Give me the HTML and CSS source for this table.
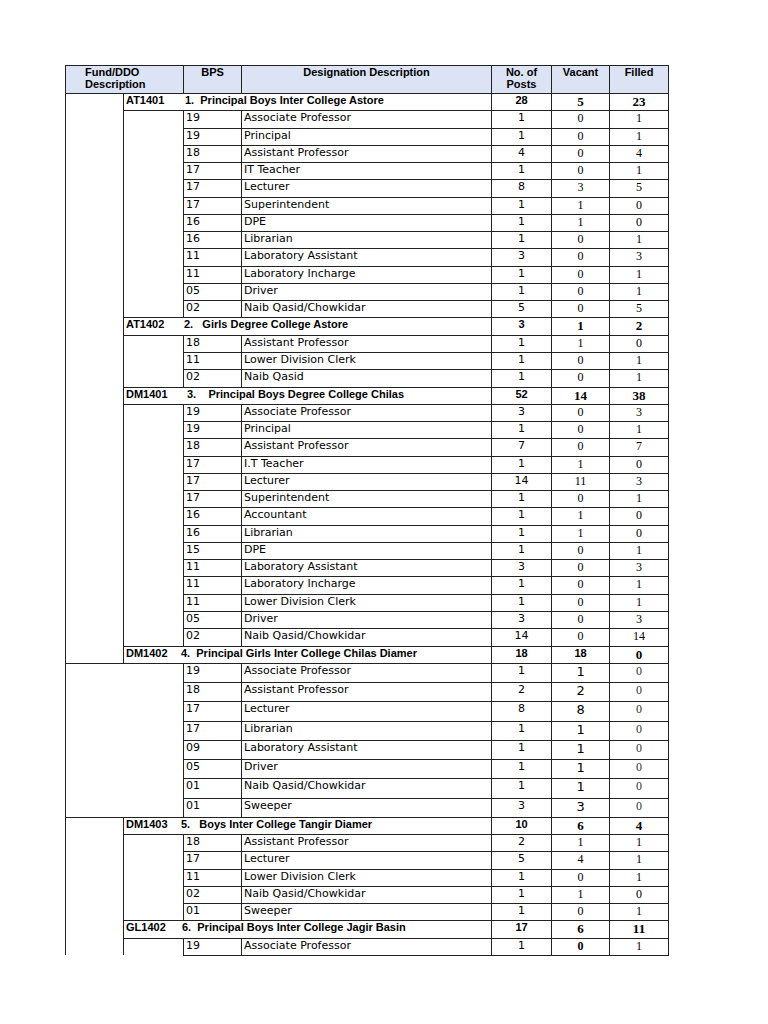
FILE: index.html
```html
<!DOCTYPE html>
<html>
<head>
<meta charset="utf-8">
<link rel="stylesheet" href="styles.css">
</head>
<body>
<div class="page">
<table class="grid">
<colgroup>
<col class="c1"><col class="c2"><col class="c3"><col class="c4"><col class="c5"><col class="c6"><col class="c7">
</colgroup>
<thead>
<tr class="hd">
<th colspan="2" class="fund">Fund/DDO<br>Description</th>
<th>BPS</th>
<th>Designation Description</th>
<th>No. of<br>Posts</th>
<th>Vacant</th>
<th>Filled</th>
</tr>
</thead>
<tbody>
<tr class="sec">
<td class="left" rowspan="33"></td>
<td class="head" colspan="3"><span class="code">AT1401</span><span class="title i4">1.&nbsp; Principal Boys Inter College Astore</span></td>
<td class="p">28</td><td class="v">5</td><td class="f">23</td>
</tr>
<tr><td class="blank" rowspan="12"></td><td class="bps">19</td><td class="des">Associate Professor</td><td class="p">1</td><td class="v">0</td><td class="f">1</td></tr>
<tr><td class="bps">19</td><td class="des">Principal</td><td class="p">1</td><td class="v">0</td><td class="f">1</td></tr>
<tr><td class="bps">18</td><td class="des">Assistant Professor</td><td class="p">4</td><td class="v">0</td><td class="f">4</td></tr>
<tr><td class="bps">17</td><td class="des">IT Teacher</td><td class="p">1</td><td class="v">0</td><td class="f">1</td></tr>
<tr><td class="bps">17</td><td class="des">Lecturer</td><td class="p">8</td><td class="v">3</td><td class="f">5</td></tr>
<tr><td class="bps">17</td><td class="des">Superintendent</td><td class="p">1</td><td class="v">1</td><td class="f">0</td></tr>
<tr><td class="bps">16</td><td class="des">DPE</td><td class="p">1</td><td class="v">1</td><td class="f">0</td></tr>
<tr><td class="bps">16</td><td class="des">Librarian</td><td class="p">1</td><td class="v">0</td><td class="f">1</td></tr>
<tr><td class="bps">11</td><td class="des">Laboratory Assistant</td><td class="p">3</td><td class="v">0</td><td class="f">3</td></tr>
<tr><td class="bps">11</td><td class="des">Laboratory Incharge</td><td class="p">1</td><td class="v">0</td><td class="f">1</td></tr>
<tr><td class="bps">05</td><td class="des">Driver</td><td class="p">1</td><td class="v">0</td><td class="f">1</td></tr>
<tr><td class="bps">02</td><td class="des">Naib Qasid/Chowkidar</td><td class="p">5</td><td class="v">0</td><td class="f">5</td></tr>

<tr class="sec">
<td class="head" colspan="3"><span class="code">AT1402</span><span class="title i3">2.&nbsp;&nbsp; Girls Degree College Astore</span></td>
<td class="p">3</td><td class="v">1</td><td class="f">2</td>
</tr>
<tr><td class="blank" rowspan="3"></td><td class="bps">18</td><td class="des">Assistant Professor</td><td class="p">1</td><td class="v">1</td><td class="f">0</td></tr>
<tr><td class="bps">11</td><td class="des">Lower Division Clerk</td><td class="p">1</td><td class="v">0</td><td class="f">1</td></tr>
<tr><td class="bps">02</td><td class="des">Naib Qasid</td><td class="p">1</td><td class="v">0</td><td class="f">1</td></tr>

<tr class="sec">
<td class="head" colspan="3"><span class="code">DM1401</span><span class="title i6">3.&nbsp;&nbsp;&nbsp; Principal Boys Degree College Chilas</span></td>
<td class="p">52</td><td class="v">14</td><td class="f">38</td>
</tr>
<tr><td class="blank" rowspan="14"></td><td class="bps">19</td><td class="des">Associate Professor</td><td class="p">3</td><td class="v">0</td><td class="f">3</td></tr>
<tr><td class="bps">19</td><td class="des">Principal</td><td class="p">1</td><td class="v">0</td><td class="f">1</td></tr>
<tr><td class="bps">18</td><td class="des">Assistant Professor</td><td class="p">7</td><td class="v">0</td><td class="f">7</td></tr>
<tr><td class="bps">17</td><td class="des">I.T Teacher</td><td class="p">1</td><td class="v">1</td><td class="f">0</td></tr>
<tr><td class="bps">17</td><td class="des">Lecturer</td><td class="p">14</td><td class="v">11</td><td class="f">3</td></tr>
<tr><td class="bps">17</td><td class="des">Superintendent</td><td class="p">1</td><td class="v">0</td><td class="f">1</td></tr>
<tr><td class="bps">16</td><td class="des">Accountant</td><td class="p">1</td><td class="v">1</td><td class="f">0</td></tr>
<tr><td class="bps">16</td><td class="des">Librarian</td><td class="p">1</td><td class="v">1</td><td class="f">0</td></tr>
<tr><td class="bps">15</td><td class="des">DPE</td><td class="p">1</td><td class="v">0</td><td class="f">1</td></tr>
<tr><td class="bps">11</td><td class="des">Laboratory Assistant</td><td class="p">3</td><td class="v">0</td><td class="f">3</td></tr>
<tr><td class="bps">11</td><td class="des">Laboratory Incharge</td><td class="p">1</td><td class="v">0</td><td class="f">1</td></tr>
<tr><td class="bps">11</td><td class="des">Lower Division Clerk</td><td class="p">1</td><td class="v">0</td><td class="f">1</td></tr>
<tr><td class="bps">05</td><td class="des">Driver</td><td class="p">3</td><td class="v">0</td><td class="f">3</td></tr>
<tr><td class="bps">02</td><td class="des">Naib Qasid/Chowkidar</td><td class="p">14</td><td class="v">0</td><td class="f">14</td></tr>

<tr class="sec">
<td class="head" colspan="3"><span class="code">DM1402</span><span class="title i0">4.&nbsp; Principal Girls Inter College Chilas Diamer</span></td>
<td class="p">18</td><td class="p">18</td><td class="f">0</td>
</tr>

<tr class="tall"><td class="left wide" rowspan="8" colspan="2"></td><td class="bps">19</td><td class="des">Associate Professor</td><td class="p">1</td><td class="vs">1</td><td class="fl">0</td></tr>
<tr class="tall"><td class="bps">18</td><td class="des">Assistant Professor</td><td class="p">2</td><td class="vs">2</td><td class="fl">0</td></tr>
<tr class="tall"><td class="bps">17</td><td class="des">Lecturer</td><td class="p">8</td><td class="vs">8</td><td class="fl">0</td></tr>
<tr class="tall"><td class="bps">17</td><td class="des">Librarian</td><td class="p">1</td><td class="vs">1</td><td class="fl">0</td></tr>
<tr class="tall"><td class="bps">09</td><td class="des">Laboratory Assistant</td><td class="p">1</td><td class="vs">1</td><td class="fl">0</td></tr>
<tr class="tall"><td class="bps">05</td><td class="des">Driver</td><td class="p">1</td><td class="vs">1</td><td class="fl">0</td></tr>
<tr class="tall"><td class="bps">01</td><td class="des">Naib Qasid/Chowkidar</td><td class="p">1</td><td class="vs">1</td><td class="fl">0</td></tr>
<tr class="tall"><td class="bps">01</td><td class="des">Sweeper</td><td class="p">3</td><td class="vs">3</td><td class="fl">0</td></tr>

<tr class="sec">
<td class="left open" rowspan="8"></td>
<td class="head" colspan="3"><span class="code">DM1403</span><span class="title i0">5.&nbsp;&nbsp; Boys Inter College Tangir Diamer</span></td>
<td class="p">10</td><td class="v">6</td><td class="f">4</td>
</tr>
<tr><td class="blank" rowspan="5"></td><td class="bps">18</td><td class="des">Assistant Professor</td><td class="p">2</td><td class="v">1</td><td class="f">1</td></tr>
<tr><td class="bps">17</td><td class="des">Lecturer</td><td class="p">5</td><td class="v">4</td><td class="f">1</td></tr>
<tr><td class="bps">11</td><td class="des">Lower Division Clerk</td><td class="p">1</td><td class="v">0</td><td class="f">1</td></tr>
<tr><td class="bps">02</td><td class="des">Naib Qasid/Chowkidar</td><td class="p">1</td><td class="v">1</td><td class="f">0</td></tr>
<tr><td class="bps">01</td><td class="des">Sweeper</td><td class="p">1</td><td class="v">0</td><td class="f">1</td></tr>

<tr class="sec">
<td class="head" colspan="3"><span class="code">GL1402</span><span class="title i1">6.&nbsp; Principal Boys Inter College Jagir Basin</span></td>
<td class="p">17</td><td class="v">6</td><td class="f">11</td>
</tr>
<tr><td class="blank open"></td><td class="bps">19</td><td class="des">Associate Professor</td><td class="p">1</td><td class="v strong">0</td><td class="f">1</td></tr>
</tbody>
</table>
</div>
</body>
</html>
```

FILE: styles.css
```css
html, body {
  margin: 0;
  padding: 0;
  background: #ffffff;
}

.page {
  padding: 65px 0 0 65px;
}

.grid {
  border-collapse: collapse;
  table-layout: fixed;
  width: 604px;
  color: #000;
  font-family: "DejaVu Sans", sans-serif;
  font-size: 11px;
}

.c1 { width: 58px; }
.c2 { width: 60px; }
.c3 { width: 58px; }
.c4 { width: 250px; }
.c5 { width: 60px; }
.c6 { width: 58px; }
.c7 { width: 59px; }

.grid th,
.grid td {
  border: 1px solid #222;
  padding: 0 2px;
  vertical-align: top;
  white-space: nowrap;
  overflow: hidden;
}

.grid th {
  background: #dbe3f4;
  font-family: "Liberation Sans", Arial, sans-serif;
  font-weight: bold;
  font-size: 11px;
  line-height: 12px;
  text-align: center;
  padding-top: 0;
}

.grid th.fund {
  text-align: left;
  padding-left: 19px;
}

.hd { height: 28px; }
.grid tbody tr { height: 17.28px; }
.grid tbody tr.tall { height: 19.25px; }

.sec td {
  font-family: "Liberation Sans", Arial, sans-serif;
  font-weight: bold;
}

.sec td.head {
  padding-left: 2px;
}

.code {
  display: inline-block;
  width: 55px;
}

.i0 { margin-left: 0; }
.i1 { margin-left: 1px; }
.i3 { margin-left: 3px; }
.i4 { margin-left: 4px; }
.i6 { margin-left: 6px; }

.left.open,
.blank.open {
  border-bottom-style: hidden;
}

.bps { padding-left: 1px; }
.des { padding-left: 2px; }

.p {
  text-align: center;
}

.v, .f, .fl {
  text-align: center;
  font-family: "Liberation Serif", "Times New Roman", serif;
  font-size: 12px;
}

.sec td.v, .sec td.f {
  font-family: "Liberation Serif", "Times New Roman", serif;
  font-size: 13px;
}

.strong { font-weight: bold; }

.vs {
  text-align: center;
  font-size: 13px;
  padding-top: 1px;
}

.fl {
  color: #333;
}
```
